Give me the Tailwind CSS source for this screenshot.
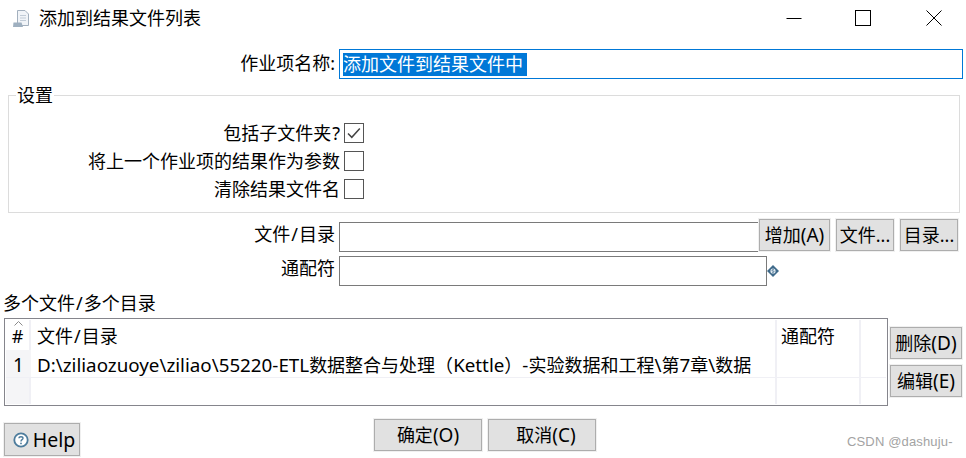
<!DOCTYPE html>
<html lang="zh-CN">
<head>
    <meta charset="UTF-8">
    <title>添加到结果文件列表</title>
    <script src="https://cdn.jsdelivr.net/npm/@tailwindcss/browser@4"></script>
</head>
<body class="bg-white overflow-hidden">
    <div class="relative w-[966px] h-[458px] bg-white text-[18px] leading-[24px] text-black font-['Noto_Sans','Noto_Sans_CJK_SC',sans-serif]">

        <!-- title bar -->
        <div class="flex items-center h-[36px] pl-[12px]">
            <svg class="w-[19px] h-[19px]" viewBox="0 0 19 19">
                <path d="M5.5 1.5h7.5l3.5 3.5v11.5h-11z" fill="#f1f4f8" stroke="#a3b0be"/>
                <path d="M8 6.5h6M8 9h6M8 11.5h6" stroke="#c2ccd7"/>
                <path d="M1.5 13.5h8l1.5 4.5H1z" fill="#9fb0c0"/>
            </svg>
            <span class="ml-[8px]">添加到结果文件列表</span>
            <svg class="w-[16px] h-[16px] ml-[585px]" viewBox="0 0 16 16"><path d="M0.5 8.5h15" stroke="#000"/></svg>
            <svg class="w-[16px] h-[16px] ml-[53px]" viewBox="0 0 16 16"><rect x="0.5" y="0.5" width="15" height="15" fill="none" stroke="#000"/></svg>
            <svg class="w-[16px] h-[16px] ml-[55px]" viewBox="0 0 16 16"><path d="M0.5 0.5l15 15M15.5 0.5l-15 15" stroke="#000"/></svg>
        </div>

        <!-- job name -->
        <div class="flex items-center mt-[13px]">
            <div class="w-[335px] text-right mb-[3px]">作业项名称:</div>
            <div class="ml-[4px] w-[624px] h-[30px] border border-[#0078d7] flex items-center pl-[3px]">
                <span class="bg-[#0078d7] text-white h-[23px] leading-[23px] w-[184px]">添加文件到结果文件中</span>
            </div>
        </div>

        <!-- settings -->
        <fieldset class="mt-[5px] ml-[8px] w-[952px] h-[129px] border border-[#dcdcdc]">
            <legend class="ml-[7px] px-[1px] bg-white leading-[22px]">设置</legend>
            <div class="mt-[13px]">
                <div class="flex items-center h-[28px]">
                    <div class="w-[331px] text-right">包括子文件夹<span class="ml-[1px]">?</span></div>
                    <div class="ml-[4px] w-[20px] h-[20px] border border-[#555] flex items-center justify-center">
                        <svg class="w-[16px] h-[16px]" viewBox="0 0 16 16"><path d="M2 8.5l3.8 3.8 8-8.8" fill="none" stroke="#444" stroke-width="1.5"/></svg>
                    </div>
                </div>
                <div class="flex items-center h-[28px]">
                    <div class="w-[331px] text-right">将上一个作业项的结果作为参数</div>
                    <div class="ml-[4px] w-[20px] h-[20px] border border-[#555]"></div>
                </div>
                <div class="flex items-center h-[28px]">
                    <div class="w-[331px] text-right">清除结果文件名</div>
                    <div class="ml-[4px] w-[20px] h-[20px] border border-[#555]"></div>
                </div>
            </div>
        </fieldset>

        <!-- file / directory -->
        <div class="flex items-start h-[32px] mt-[6px]">
            <div class="w-[335px] text-right mt-[3px]">文件<span class="px-[1px]">/</span>目录</div>
            <input type="text" class="ml-[4px] mt-[3px] w-[420px] h-[30px] border border-[#7a7a7a] border-r-0 outline-none">
            <button class="w-[71px] h-[32px] leading-[30px] bg-[#e1e1e1] border border-[#adadad] shadow-[0_0_0_1px_#f0f0f0]">增加<span class="text-[19px]">(A)</span></button>
            <button class="ml-[6px] w-[58px] h-[32px] leading-[30px] bg-[#e1e1e1] border border-[#adadad] shadow-[0_0_0_1px_#f0f0f0]">文件...</button>
            <button class="ml-[6px] w-[58px] h-[32px] leading-[30px] bg-[#e1e1e1] border border-[#adadad] shadow-[0_0_0_1px_#f0f0f0]">目录...</button>
        </div>

        <!-- wildcard -->
        <div class="flex items-center mt-[5px]">
            <div class="w-[335px] text-right mb-[6px]">通配符</div>
            <input type="text" class="ml-[4px] w-[428px] h-[30px] border border-[#7a7a7a] outline-none">
            <svg class="w-[12px] h-[12px]" viewBox="0 0 12 12">
                <path d="M6 0l6 6-6 6-6-6z" fill="#3f6a8a"/>
                <circle cx="6" cy="6" r="2.6" fill="#dfe9f0"/>
                <path d="M7 4.9C6.2 4.3 5 4.6 5 5.4 5 6.3 7 5.8 7 6.6 7 7.4 5.8 7.7 5 7.1" fill="none" stroke="#3f6a8a" stroke-width="0.8"/>
            </svg>
        </div>

        <div class="mt-[5px] pl-[3px]">多个文件<span class="px-[1px]">/</span>多个目录</div>

        <!-- file table -->
        <div class="flex items-start mt-[3px] pl-[4px]">
            <div class="w-[884px] h-[88px] border border-[#85858c] p-[1px]">
                <div class="grid grid-cols-[25px_744px_84px_27px] grid-rows-[30px_28px_26px] h-full">
                    <div class="relative text-center leading-[32px] border-r-2 border-[#f0f0f5]">
                        #
                        <svg class="absolute left-[8px] top-[1px] w-[9px] h-[5px]" viewBox="0 0 9 5"><path d="M0.5 4.5l4-4 4 4" fill="none" stroke="#8a8a8a"/></svg>
                    </div>
                    <div class="pl-[6px] leading-[32px]">文件<span class="px-[1px]">/</span>目录</div>
                    <div class="pl-[4px] leading-[32px] border-l-2 border-[#f0f0f5]">通配符</div>
                    <div class="border-l-2 border-[#f0f0f5]"></div>

                    <div class="text-center leading-[30px] bg-[#f5f5f7] border-b border-[#f0f0f5] text-[19px]">1</div>
                    <div class="pl-[6px] leading-[30px] border-b border-[#f0f0f5] whitespace-nowrap"><span class="text-[18.8px]">D:\ziliaozuoye\ziliao\55220-ETL</span>数据整合与处理（<span class="text-[18.8px]">Kettle</span>）<span class="text-[18.8px]">-</span>实验数据和工程<span class="text-[18.8px]">\</span>第<span class="text-[18.8px]">7</span>章<span class="text-[18.8px]">\</span>数据</div>
                    <div class="border-l-2 border-b border-[#f0f0f5]"></div>
                    <div class="border-l-2 border-b border-[#f0f0f5]"></div>

                    <div class="bg-[#f5f5f7] border-r-2 border-[#f0f0f5]"></div>
                    <div></div>
                    <div class="border-l-2 border-[#f0f0f5]"></div>
                    <div class="border-l-2 border-[#f0f0f5]"></div>
                </div>
            </div>
            <div class="ml-[2px] mt-[9px] flex flex-col gap-[6px]">
                <button class="w-[72px] h-[32px] leading-[30px] bg-[#e1e1e1] border border-[#adadad] shadow-[0_0_0_1px_#f0f0f0]">删除<span class="text-[19px]">(D)</span></button>
                <button class="w-[72px] h-[32px] leading-[30px] bg-[#e1e1e1] border border-[#adadad] shadow-[0_0_0_1px_#f0f0f0]">编辑<span class="text-[19px]">(E)</span></button>
            </div>
        </div>

        <!-- bottom buttons -->
        <div class="flex items-start pl-[4px] mt-[13px]">
            <button class="mt-[4px] w-[76px] h-[33px] pl-[4px] bg-[#e1e1e1] border border-[#adadad] shadow-[0_0_0_1px_#f0f0f0] flex items-center justify-center text-[19.5px]">
                <svg class="w-[16px] h-[16px] mr-[4px]" viewBox="0 0 16 16">
                    <circle cx="8" cy="8" r="6.7" fill="#fff" stroke="#4d7c9c" stroke-width="1.8"/>
                    <path d="M6 6.3C6 4.2 10 4.2 10 6.3 10 7.8 8 7.6 8 9.4" fill="none" stroke="#4d7c9c" stroke-width="1.4"/>
                    <circle cx="8" cy="11.4" r="0.9" fill="#4d7c9c"/>
                </svg>
                Help
            </button>
            <button class="ml-[294px] w-[108px] h-[32px] leading-[30px] bg-[#e1e1e1] border border-[#adadad] shadow-[0_0_0_1px_#f0f0f0]">确定<span class="text-[19px]">(O)</span></button>
            <button class="ml-[6px] w-[108px] h-[32px] pl-[8px] leading-[30px] bg-[#e1e1e1] border border-[#adadad] shadow-[0_0_0_1px_#f0f0f0]">取消<span class="text-[19px]">(C)</span></button>
        </div>

        <!-- watermark -->
        <div class="absolute left-[847px] top-[433px] text-[13px] tracking-[0.15px] leading-[18px] text-[#a3a3a3] font-['Liberation_Sans',sans-serif]">CSDN @dashuju-</div>
    </div>
</body>
</html>
